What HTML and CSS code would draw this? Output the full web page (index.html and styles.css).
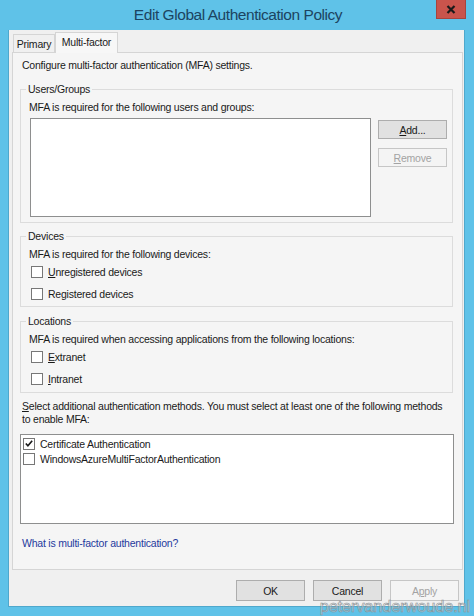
FILE: index.html
```html
<!DOCTYPE html>
<html>
<head>
<meta charset="utf-8">
<link rel="stylesheet" href="styles.css">
</head>
<body>
<div class="window">
  <div class="titlebar">Edit Global Authentication Policy</div>
  <div class="close"><svg width="10" height="9" viewBox="0 0 10 9"><path d="M1.5 1 L8.5 8 M8.5 1 L1.5 8" stroke="#1a1a1a" stroke-width="2.2"/></svg></div>
  <div class="client">
    <div class="tabs">
      <div class="tab">Primary</div>
      <div class="tab active">Multi-factor</div>
    </div>
    <div class="panel">
      <div class="intro">Configure multi-factor authentication (MFA) settings.</div>

      <fieldset class="group users">
        <legend>Users/Groups</legend>
        <div class="line">MFA is required for the following users and groups:</div>
        <div class="users-row">
          <div class="listbox"></div>
          <div class="side-buttons">
            <div class="btn"><u>A</u>dd...</div>
            <div class="btn disabled"><u>R</u>emove</div>
          </div>
        </div>
      </fieldset>

      <fieldset class="group devices">
        <legend>Devices</legend>
        <div class="line">MFA is required for the following devices:</div>
        <div class="cbrow"><span class="cb"></span><span><u>U</u>nregistered devices</span></div>
        <div class="cbrow"><span class="cb"></span><span>Re<u>g</u>istered devices</span></div>
      </fieldset>

      <fieldset class="group locations">
        <legend>Locations</legend>
        <div class="line">MFA is required when accessing applications from the following locations:</div>
        <div class="cbrow"><span class="cb"></span><span><u>E</u>xtranet</span></div>
        <div class="cbrow"><span class="cb"></span><span><u>I</u>ntranet</span></div>
      </fieldset>

      <div class="select-text"><u>S</u>elect additional authentication methods. You must select at least one of the following methods<br>to enable MFA:</div>

      <div class="methods">
        <div class="mrow"><span class="cb small"><svg width="11" height="11" viewBox="0 0 11 11"><path d="M2 5.5 L4.3 8 L9 2.5" fill="none" stroke="#1a1a1a" stroke-width="1.8"/></svg></span><span>Certificate Authentication</span></div>
        <div class="mrow"><span class="cb small"></span><span>WindowsAzureMultiFactorAuthentication</span></div>
      </div>

      <div class="link">What is multi-factor authentication?</div>
    </div>
    <div class="buttons">
      <div class="btn big">OK</div>
      <div class="btn big">Cancel</div>
      <div class="btn big disabled">A<u>p</u>ply</div>
    </div>
  </div>
  <div class="watermark">petervanderwoude.nl</div>
</div>
</body>
</html>
```

FILE: styles.css
```css
html, body {
  margin: 0;
  padding: 0;
}

body {
  background: #5fc2e8;
  font-family: "Liberation Sans", Arial, sans-serif;
  font-size: 10.5px;
  letter-spacing: -0.22px;
  color: #1a1a1a;
}

.window {
  position: relative;
  width: 474px;
  height: 616px;
  display: flex;
  flex-direction: column;
  background: #5fc2e8;
  overflow: hidden;
}

.titlebar {
  height: 30px;
  display: flex;
  align-items: center;
  justify-content: center;
  font-size: 15.5px;
  letter-spacing: -0.45px;
  color: #1c4461;
  padding-left: 2px;
}

.close {
  position: absolute;
  top: 0;
  right: 8px;
  width: 30px;
  height: 19px;
  background: #c9544c;
  border: 1px solid #a8443d;
  border-top: none;
  box-sizing: border-box;
  display: flex;
  align-items: center;
  justify-content: center;
}

.client {
  flex: 1;
  margin: 0 9px 9px 8px;
  background: #f0f0f0;
  border: 1px solid #4fa8cc;
  border-top: none;
  padding: 0 1px 0 3px;
  display: flex;
  flex-direction: column;
}

.tabs {
  height: 22px;
  display: flex;
  align-items: flex-end;
  padding-left: 1px;
}

.tab {
  height: 18px;
  box-sizing: border-box;
  border: 1px solid #d5d5d5;
  border-bottom: none;
  background: #f0f0f0;
  display: flex;
  align-items: center;
  padding: 0 4px;
  width: 42px;
  justify-content: center;
}

.tab.active {
  height: 21px;
  width: 63px;
  background: #f7f7f7;
  margin-bottom: -1px;
  position: relative;
  z-index: 1;
  align-items: flex-start;
  padding-top: 3px;
}

.panel {
  height: 518px;
  box-sizing: border-box;
  border: 1px solid #d5d5d5;
  background: #f5f5f5;
  display: flex;
  flex-direction: column;
}

.intro {
  line-height: 14px;
  margin-top: 5px;
  padding-left: 9px;
}

.group {
  margin: 10px 9px 0 7px;
  padding: 0 0 0 8px;
  border: 1px solid #dcdcdc;
  min-width: 0;
}

.group legend {
  padding: 0 2px;
  margin-left: -3px;
  line-height: 14px;
}

.line {
  line-height: 14px;
  margin-top: 4px;
}

.users-row {
  display: flex;
  margin-top: 4px;
  padding-bottom: 5px;
}

.listbox {
  width: 341px;
  height: 99px;
  box-sizing: border-box;
  margin-left: 1px;
  background: #ffffff;
  border: 1px solid #8e8f8f;
}

.side-buttons {
  display: flex;
  flex-direction: column;
  gap: 9px;
  margin-left: 7px;
  margin-top: 2px;
}

.btn {
  width: 69px;
  height: 19px;
  box-sizing: border-box;
  background: #e1e1e1;
  border: 1px solid #adadad;
  display: flex;
  align-items: center;
  justify-content: center;
}

.btn.disabled {
  background: #f4f4f4;
  border-color: #c6c6c6;
  color: #a3a3a3;
}

.devices {
  margin-top: 6px;
  padding-bottom: 1px;
}

.locations {
  margin-top: 7px;
  padding-bottom: 2px;
}

.cbrow {
  height: 22px;
  display: flex;
  align-items: center;
  gap: 5px;
  padding-left: 2px;
}

.cb {
  width: 12px;
  height: 12px;
  box-sizing: border-box;
  border: 1px solid #777777;
  background: #ffffff;
  display: flex;
  align-items: center;
  justify-content: center;
  flex-shrink: 0;
}

.cb.small {
  width: 12px;
  height: 12px;
}

.select-text {
  margin-top: 7px;
  padding-left: 9px;
  line-height: 13px;
}

.methods {
  margin: 8px 8px 0 7px;
  height: 90px;
  box-sizing: border-box;
  background: #ffffff;
  border: 1px solid #8e8f8f;
  padding: 1px 0 0 2px;
}

.mrow {
  height: 15px;
  display: flex;
  align-items: center;
  gap: 5px;
}

.link {
  margin-top: 12px;
  padding-left: 9px;
  line-height: 14px;
  color: #1f3a9d;
}

.buttons {
  display: flex;
  justify-content: flex-end;
  gap: 8px;
  margin-top: 10px;
  padding-right: 4px;
}

.btn.big {
  height: 21px;
}

.watermark {
  position: absolute;
  right: 4px;
  bottom: 1px;
  font-size: 16.5px;
  letter-spacing: -0.2px;
  line-height: 17px;
  color: rgba(255, 255, 255, 0.35);
  -webkit-text-stroke: 0.6px #8a8f93;
}
```
